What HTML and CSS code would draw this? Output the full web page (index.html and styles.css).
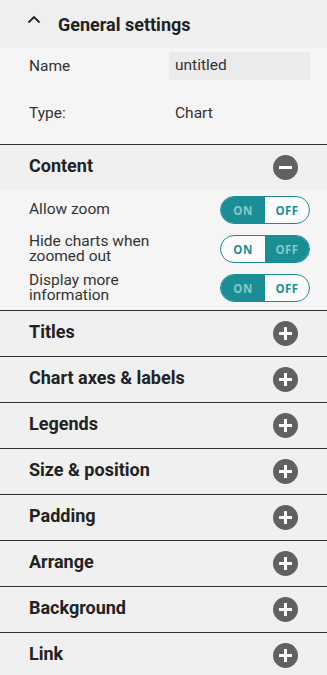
FILE: index.html
```html
<!DOCTYPE html>
<html>
<head>
<meta charset="utf-8">
<link rel="stylesheet" href="styles.css">
</head>
<body>
<div class="panel">
  <div class="gen-head">
    <svg class="caret" width="14" height="9" viewBox="0 0 14 9"><path d="M1.5 7.5 L7 2 L12.5 7.5" fill="none" stroke="#222" stroke-width="1.8"/></svg>
    <span class="gen-title">General settings</span>
  </div>
  <div class="gen-body">
    <div class="field-row">
      <span class="field-label">Name</span>
      <div class="input">untitled</div>
    </div>
    <div class="field-row type-row">
      <span class="field-label">Type:</span>
      <span class="field-value">Chart</span>
    </div>
  </div>

  <div class="section">
    <span class="sec-title">Content</span>
    <svg class="sec-icon" width="25" height="25" viewBox="0 0 25 25"><circle cx="12.5" cy="12.5" r="12.5" fill="#616161"/><rect x="6" y="11" width="13" height="3" fill="#fff"/></svg>
  </div>
  <div class="content-body">
    <div class="opt-row">
      <span class="opt-label">Allow zoom</span>
      <div class="toggle"><span class="half on">ON</span><span class="half">OFF</span></div>
    </div>
    <div class="opt-row">
      <span class="opt-label">Hide charts when zoomed out</span>
      <div class="toggle"><span class="half">ON</span><span class="half on">OFF</span></div>
    </div>
    <div class="opt-row">
      <span class="opt-label">Display more information</span>
      <div class="toggle"><span class="half on">ON</span><span class="half">OFF</span></div>
    </div>
  </div>

  <div class="section"><span class="sec-title">Titles</span><svg class="sec-icon" width="25" height="25" viewBox="0 0 25 25"><circle cx="12.5" cy="12.5" r="12.5" fill="#616161"/><rect x="6" y="11" width="13" height="3" fill="#fff"/><rect x="11" y="6" width="3" height="13" fill="#fff"/></svg></div>
  <div class="section"><span class="sec-title">Chart axes &amp; labels</span><svg class="sec-icon" width="25" height="25" viewBox="0 0 25 25"><circle cx="12.5" cy="12.5" r="12.5" fill="#616161"/><rect x="6" y="11" width="13" height="3" fill="#fff"/><rect x="11" y="6" width="3" height="13" fill="#fff"/></svg></div>
  <div class="section"><span class="sec-title">Legends</span><svg class="sec-icon" width="25" height="25" viewBox="0 0 25 25"><circle cx="12.5" cy="12.5" r="12.5" fill="#616161"/><rect x="6" y="11" width="13" height="3" fill="#fff"/><rect x="11" y="6" width="3" height="13" fill="#fff"/></svg></div>
  <div class="section"><span class="sec-title">Size &amp; position</span><svg class="sec-icon" width="25" height="25" viewBox="0 0 25 25"><circle cx="12.5" cy="12.5" r="12.5" fill="#616161"/><rect x="6" y="11" width="13" height="3" fill="#fff"/><rect x="11" y="6" width="3" height="13" fill="#fff"/></svg></div>
  <div class="section"><span class="sec-title">Padding</span><svg class="sec-icon" width="25" height="25" viewBox="0 0 25 25"><circle cx="12.5" cy="12.5" r="12.5" fill="#616161"/><rect x="6" y="11" width="13" height="3" fill="#fff"/><rect x="11" y="6" width="3" height="13" fill="#fff"/></svg></div>
  <div class="section"><span class="sec-title">Arrange</span><svg class="sec-icon" width="25" height="25" viewBox="0 0 25 25"><circle cx="12.5" cy="12.5" r="12.5" fill="#616161"/><rect x="6" y="11" width="13" height="3" fill="#fff"/><rect x="11" y="6" width="3" height="13" fill="#fff"/></svg></div>
  <div class="section"><span class="sec-title">Background</span><svg class="sec-icon" width="25" height="25" viewBox="0 0 25 25"><circle cx="12.5" cy="12.5" r="12.5" fill="#616161"/><rect x="6" y="11" width="13" height="3" fill="#fff"/><rect x="11" y="6" width="3" height="13" fill="#fff"/></svg></div>
  <div class="section"><span class="sec-title">Link</span><svg class="sec-icon" width="25" height="25" viewBox="0 0 25 25"><circle cx="12.5" cy="12.5" r="12.5" fill="#616161"/><rect x="6" y="11" width="13" height="3" fill="#fff"/><rect x="11" y="6" width="3" height="13" fill="#fff"/></svg></div>
</div>
</body>
</html>
```
FILE: styles.css
```css
html, body {
  margin: 0;
  padding: 0;
  background: #f5f5f5;
}
body {
  font-family: Roboto, "Liberation Sans", sans-serif;
  color: #333;
}
.panel {
  width: 327px;
}
.gen-head {
  height: 48px;
  background: #efefef;
  display: flex;
  align-items: center;
  padding-left: 27px;
  box-sizing: border-box;
}
.caret {
  margin-top: -10px;
  margin-right: 17px;
}
.gen-title {
  font-size: 18px;
  font-weight: 700;
  color: #222;
}
.gen-body {
  background: #f5f5f5;
  padding: 4px 17px 0 29px;
  height: 96px;
  box-sizing: border-box;
}
.field-row {
  display: flex;
  align-items: center;
  height: 28px;
  font-size: 15.5px;
}
.type-row {
  margin-top: 19px;
}
.field-label {
  width: 140px;
}
.input {
  width: 141px;
  height: 28px;
  box-sizing: border-box;
  background: #ebebeb;
  padding-left: 6px;
  line-height: 27px;
  color: #333;
}
.field-value {
  padding-left: 6px;
}
.section {
  border-top: 1px solid #333;
  background: #f0f0f0;
  height: 45px;
  display: flex;
  align-items: center;
  justify-content: space-between;
  padding: 0 29px 0 29px;
  box-sizing: content-box;
}
.sec-title {
  font-size: 18px;
  font-weight: 700;
  color: #222;
  margin-top: -4px;
}
.sec-icon {
  display: block;
}
.content-body {
  background: #f5f5f5;
  padding: 6px 17px 8px 29px;
  display: flex;
  flex-direction: column;
  gap: 11px;
}
.opt-row {
  display: flex;
  align-items: center;
  justify-content: space-between;
  height: 28px;
}
.opt-label {
  font-size: 15.5px;
  line-height: 15.5px;
  width: 160px;
  color: #333;
}
.toggle {
  width: 90px;
  height: 28px;
  box-sizing: border-box;
  border: 1.5px solid #1b8e95;
  border-radius: 14px;
  overflow: hidden;
  display: flex;
  background: #fbfbfb;
}
.half {
  flex: 1;
  display: flex;
  align-items: center;
  justify-content: center;
  font-family: "Open Sans", "Liberation Sans", sans-serif;
  font-size: 11.5px;
  font-weight: 700;
  letter-spacing: 0.4px;
  color: #1b8e95;
}
.half.on {
  background: #1b8e95;
  color: #86c9cc;
}
```
